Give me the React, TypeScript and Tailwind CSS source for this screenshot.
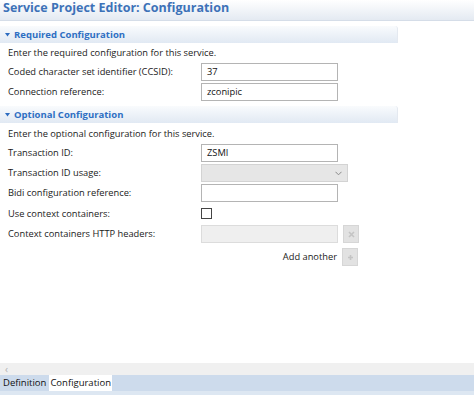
import React from "react";

const font = { fontFamily: '"Open Sans", "Noto Sans", sans-serif' };

function SectionHeader({ title }: { title: string }) {
  return (
    <div className="w-[398px] h-[17px] flex items-center gap-[4px] pl-[5px] bg-gradient-to-b from-[#f9fbfd] to-[#e1e9f3] border-r border-[#e4e9f0] rounded-tr-[3px]">
      <svg width="5" height="4" viewBox="0 0 5 4">
        <path d="M0 0 L5 0 L2.5 3.5 Z" fill="#2d6cc0" />
      </svg>
      <span className="text-[9.5px] font-bold text-[#2e6fc3] leading-none">{title}</span>
    </div>
  );
}

function Row({ label, children }: { label: string; children?: React.ReactNode }) {
  return (
    <div className="grid grid-cols-[193px_1fr] items-center">
      <span className="text-[9.3px] text-[#1a1a1a] whitespace-nowrap">{label}</span>
      <div className="flex items-center">{children}</div>
    </div>
  );
}

function TextBox({ value = "", disabled = false }: { value?: string; disabled?: boolean }) {
  return (
    <div
      className={
        "w-[137px] h-[18px] border flex items-center px-[5px] text-[9.3px] text-[#111] " +
        (disabled ? "bg-[#efefef] border-[#dcdcdc]" : "bg-white border-[#b4b4b4]")
      }
    >
      {value}
    </div>
  );
}

function SmallButton({ kind }: { kind: "x" | "plus" }) {
  return (
    <div className="w-[16px] h-[18px] ml-[5px] bg-[#e2e2e2] border border-[#d6d6d6] flex items-center justify-center">
      {kind === "x" ? (
        <svg width="7" height="7" viewBox="0 0 7 7">
          <path d="M1 1 L6 6 M6 1 L1 6" stroke="#c4c4c4" strokeWidth="1.6" />
        </svg>
      ) : (
        <svg width="7" height="7" viewBox="0 0 7 7">
          <path d="M3.5 1 V6 M1 3.5 H6" stroke="#c4c4c4" strokeWidth="1.6" />
        </svg>
      )}
    </div>
  );
}

export default function App() {
  return (
    <div className="w-[474px] h-[395px] bg-white flex flex-col overflow-hidden" style={font}>
      {/* title */}
      <div className="h-[21px] shrink-0 flex items-center pl-[3px] pb-[3px] bg-gradient-to-b from-white to-[#e4eaf2] border-b border-[#d5dde8]">
        <span className="text-[12.5px] font-bold text-[#3d72b8] leading-none">
          Service Project Editor: Configuration
        </span>
      </div>

      <div className="flex-1 flex flex-col pt-[5px]">
        {/* required */}
        <SectionHeader title="Required Configuration" />
        <div className="flex flex-col pl-[8px] pt-[1px] gap-[2px]">
          <span className="text-[9.3px] text-[#1a1a1a] h-[17px] flex items-center">
            Enter the required configuration for this service.
          </span>
          <Row label="Coded character set identifier (CCSID):">
            <TextBox value="37" />
          </Row>
          <Row label="Connection reference:">
            <TextBox value="zconipic" />
          </Row>
        </div>

        {/* optional */}
        <div className="mt-[5px]">
          <SectionHeader title="Optional Configuration" />
        </div>
        <div className="flex flex-col pl-[8px] pt-[2px] gap-[2px]">
          <span className="text-[9.3px] text-[#1a1a1a] h-[17px] flex items-center">
            Enter the optional configuration for this service.
          </span>
          <Row label="Transaction ID:">
            <TextBox value="ZSMI" />
          </Row>
          <Row label="Transaction ID usage:">
            <div className="w-[147px] h-[18px] bg-[#e6e6e6] border border-[#d3d3d3] flex items-center justify-end pr-[5px]">
              <svg width="7" height="5" viewBox="0 0 7 5">
                <path d="M0.5 0.8 L3.5 3.8 L6.5 0.8" stroke="#8a8a8a" fill="none" strokeWidth="1" />
              </svg>
            </div>
          </Row>
          <Row label="Bidi configuration reference:">
            <TextBox />
          </Row>
          <Row label="Use context containers:">
            <div className="w-[11px] h-[11px] border border-[#444] bg-white my-[4px]" />
          </Row>
          <Row label="Context containers HTTP headers:">
            <TextBox disabled />
            <SmallButton kind="x" />
          </Row>
          <div className="flex items-center justify-end w-[350px] mt-[3px]">
            <span className="text-[9.3px] text-[#1a1a1a]">Add another</span>
            <SmallButton kind="plus" />
          </div>
        </div>
      </div>

      {/* scrollbar */}
      <div className="h-[12px] shrink-0 bg-[#f0f0f0] flex items-center pl-[5px] text-[10px] text-[#b0b0b0] leading-none">
        ‹
      </div>
      {/* tabs */}
      <div className="h-[16px] shrink-0 bg-[#cddbec] flex items-end pl-[2px] gap-[2px]">
        <span className="text-[9.5px] text-[#111] h-[16px] leading-[16px] px-[1px]">Definition</span>
        <span className="text-[9.5px] text-[#111] h-[16px] leading-[16px] px-[1px] bg-white">Configuration</span>
      </div>
      <div className="h-[4px] shrink-0 bg-[#dde7f2]" />
    </div>
  );
}
